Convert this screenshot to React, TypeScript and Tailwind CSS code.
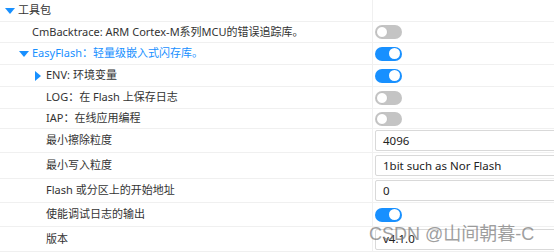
import React from 'react';

type Control =
  | { type: 'toggle'; on: boolean }
  | { type: 'input'; value: string }
  | null;

type Row = {
  label: string;
  indent: string;
  arrow?: 'down' | 'right';
  blue?: boolean;
  control: Control;
  height: string;
};

const rows: Row[] = [
  { label: '工具包', indent: 'pl-[4px]', arrow: 'down', control: null, height: 'h-[22px]' },
  { label: 'CmBacktrace: ARM Cortex-M系列MCU的错误追踪库。', indent: 'pl-[18px]', control: { type: 'toggle', on: false }, height: 'h-[21px]' },
  { label: 'EasyFlash：轻量级嵌入式闪存库。', indent: 'pl-[18px]', arrow: 'down', blue: true, control: { type: 'toggle', on: true }, height: 'h-[22px]' },
  { label: 'ENV: 环境变量', indent: 'pl-[32px]', arrow: 'right', control: { type: 'toggle', on: true }, height: 'h-[22px]' },
  { label: 'LOG：在 Flash 上保存日志', indent: 'pl-[32px]', control: { type: 'toggle', on: false }, height: 'h-[22px]' },
  { label: 'IAP：在线应用编程', indent: 'pl-[32px]', control: { type: 'toggle', on: false }, height: 'h-[20px]' },
  { label: '最小擦除粒度', indent: 'pl-[32px]', control: { type: 'input', value: '4096' }, height: 'h-[24px]' },
  { label: '最小写入粒度', indent: 'pl-[32px]', control: { type: 'input', value: '1bit such as Nor Flash' }, height: 'h-[26px]' },
  { label: 'Flash 或分区上的开始地址', indent: 'pl-[32px]', control: { type: 'input', value: '0' }, height: 'h-[24px]' },
  { label: '使能调试日志的输出', indent: 'pl-[32px]', control: { type: 'toggle', on: true }, height: 'h-[24px]' },
  { label: '版本', indent: 'pl-[32px]', control: { type: 'input', value: 'v4.1.0' }, height: 'h-[25px]' },
];

function Arrow({ dir }: { dir: 'down' | 'right' }) {
  if (dir === 'down') {
    return (
      <svg width="10" height="6" viewBox="0 0 10 6">
        <path d="M0 0 L10 0 L5 6 Z" fill="#1890ff" />
      </svg>
    );
  }
  return (
    <svg width="6" height="10" viewBox="0 0 6 10">
      <path d="M0 0 L6 5 L0 10 Z" fill="#1890ff" />
    </svg>
  );
}

function Toggle({ on }: { on: boolean }) {
  return (
    <div
      className={
        on
          ? 'flex h-[14px] w-[27px] items-center justify-end rounded-full bg-[#1890ff] px-[2px]'
          : 'flex h-[14px] w-[27px] items-center justify-start rounded-full bg-[#c4c4c4] px-[1px]'
      }
    >
      <div
        className={
          on
            ? 'h-[11px] w-[11px] rounded-full bg-white'
            : 'h-[12px] w-[12px] rounded-full border border-[#bdbdbd] bg-white'
        }
      />
    </div>
  );
}

export default function App() {
  return (
    <div className="relative h-[252px] w-[554px] overflow-hidden bg-white font-['Noto_Sans','Noto_Sans_CJK_SC',sans-serif] text-[11px] text-[#333]">
      {rows.map((row) => (
        <div key={row.label} className={`flex border-b border-[#f0f0f0] ${row.height}`}>
          <div className={`flex w-[373px] shrink-0 items-center border-r border-[#f0f0f0] ${row.indent}`}>
            {/* arrow slot, 14px wide, always present */}
            <span className="flex w-[14px] shrink-0 items-center justify-center pr-[3px]">
              {row.arrow && <Arrow dir={row.arrow} />}
            </span>
            <span className={row.blue ? 'whitespace-nowrap text-[#1890ff]' : 'whitespace-nowrap'}>
              {row.label}
            </span>
          </div>
          <div className="flex min-w-0 flex-1 items-center pl-[2px]">
            {row.control?.type === 'toggle' && <Toggle on={row.control.on} />}
            {row.control?.type === 'input' && (
              <div className="flex h-[21px] w-[190px] shrink-0 items-center rounded-[2px] border border-[#d9d9d9] px-[7px] text-[11.5px] text-[#222]">
                {row.control.value}
              </div>
            )}
          </div>
        </div>
      ))}

      {/* watermark */}
      <div className="pointer-events-none absolute left-[369px] top-[221px] whitespace-nowrap font-['Liberation_Sans','Noto_Sans_CJK_SC',sans-serif] text-[18px] text-[#777] opacity-70">
        CSDN @山间朝暮-C
      </div>
    </div>
  );
}
